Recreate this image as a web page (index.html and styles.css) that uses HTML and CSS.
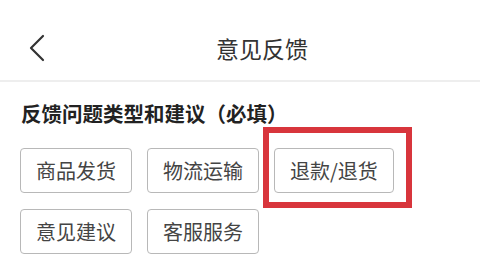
FILE: index.html
```html
<!DOCTYPE html>
<html lang="zh-CN">
<head>
<meta charset="utf-8">
<title>意见反馈</title>
<link rel="stylesheet" href="styles.css">
</head>
<body>
<div class="page">
  <header class="header">
    <svg class="back" width="16" height="28" viewBox="0 0 16 28" aria-hidden="true">
      <path d="M14 2 L2 14 L14 26" fill="none" stroke="#333" stroke-width="2.2" stroke-linecap="round" stroke-linejoin="round"/>
    </svg>
    <h1 class="title">意见反馈</h1>
  </header>
  <section class="section">
    <h2 class="heading">反馈问题类型和建议（必填）</h2>
    <div class="options">
      <button class="option">商品发货</button>
      <button class="option">物流运输</button>
      <button class="option">退款/退货</button>
      <button class="option">意见建议</button>
      <button class="option">客服服务</button>
    </div>
  </section>
  <div class="highlight"></div>
</div>
</body>
</html>
```

FILE: styles.css
```css
html, body {
  margin: 0;
  padding: 0;
  background: #ffffff;
}

body {
  font-family: "Noto Sans CJK SC", "Noto Sans", sans-serif;
  color: #333;
}

.page {
  position: relative;
  width: 480px;
  height: 256px;
  overflow: hidden;
}

.header {
  display: flex;
  align-items: center;
  height: 64px;
  padding: 16px 0 0 29px;
  border-bottom: 2px solid #eeeeee;
}

.back {
  display: block;
  flex: none;
}

.title {
  margin: 0 0 0 171px;
  font-size: 23px;
  line-height: 28px;
  font-weight: normal;
  color: #333;
}

.section {
  padding: 19px 0 0 21px;
}

.heading {
  margin: 0;
  font-size: 20.5px;
  line-height: 24px;
  font-weight: bold;
  color: #222;
}

.options {
  display: flex;
  flex-wrap: wrap;
  column-gap: 15px;
  row-gap: 16px;
  width: 400px;
  margin: 23px 0 0 -1px;
}

.option {
  box-sizing: border-box;
  height: 45px;
  padding: 0 15px;
  border: 1.5px solid #b8b8b8;
  border-radius: 4px;
  background: #fff;
  font-family: inherit;
  font-size: 20px;
  line-height: 24px;
  color: #444;
}

.highlight {
  position: absolute;
  left: 263px;
  top: 127px;
  width: 149px;
  height: 81px;
  box-sizing: border-box;
  border: 6px solid #d8353c;
}
```
